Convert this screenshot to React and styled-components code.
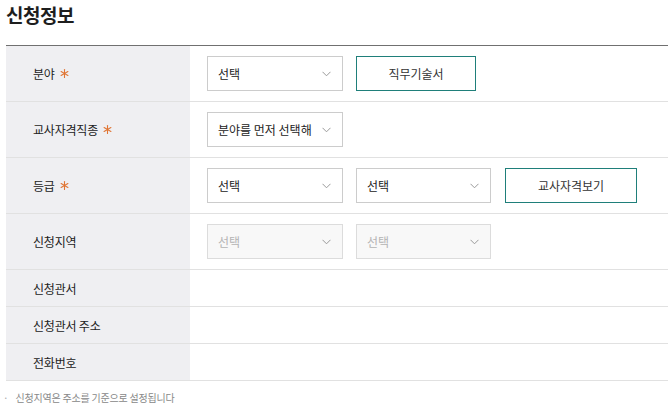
import React from "react";
import styled, { createGlobalStyle } from "styled-components";

const GlobalStyle = createGlobalStyle`
  html, body {
    margin: 0;
    padding: 0;
    background: #fff;
    font-family: "Noto Sans CJK KR", "Noto Sans", sans-serif;
    color: #222;
  }
`;

const Page = styled.div`
  padding: 0 0 0 6px;
  width: 662px;
`;

const Title = styled.h2`
  margin: 0;
  padding-top: 2px;
  height: 43px;
  font-size: 19px;
  font-weight: 700;
  letter-spacing: -0.5px;
  line-height: 26px;
  color: #1e1e1e;
`;

const Table = styled.div`
  border-top: 1px solid #707070;
`;

const Row = styled.div`
  display: grid;
  grid-template-columns: 184px 1fr;
  border-bottom: 1px solid #e1e1e1;
  min-height: ${({ $tall }) => ($tall ? "55px" : "36px")};
`;

const Label = styled.div`
  background: #efeff2;
  display: flex;
  align-items: center;
  padding-left: 27px;
  font-size: 12px;
  color: #222;
  letter-spacing: -0.2px;
`;

const StarIcon = styled.svg`
  margin-left: 5px;
  flex-shrink: 0;
`;

const Cell = styled.div`
  display: flex;
  align-items: center;
  padding: 10px 0 10px 17px;
  gap: 13px;
`;

const Select = styled.div`
  box-sizing: border-box;
  width: ${({ $w }) => $w || 136}px;
  height: 35px;
  border: 1px solid ${({ disabled }) => (disabled ? "#dcdcdc" : "#cccccc")};
  background: ${({ disabled }) => (disabled ? "#f8f8f8" : "#fff")};
  display: flex;
  align-items: center;
  justify-content: space-between;
  padding: 0 11px 0 10px;
  font-size: 12px;
  color: ${({ disabled }) => (disabled ? "#b4b4b4" : "#222")};
  white-space: nowrap;
  overflow: hidden;
`;

const Button = styled.button`
  box-sizing: border-box;
  width: ${({ $w }) => $w}px;
  height: 35px;
  margin-left: ${({ $ml }) => $ml || 0}px;
  border: 1px solid #1f7f7a;
  background: #fff;
  color: #333;
  font-family: inherit;
  font-size: 12px;
  cursor: pointer;
`;

const Note = styled.p`
  margin: 9px 0 0 -3px;
  font-size: 10px;
  color: #888;
  letter-spacing: -0.2px;
  &::before {
    content: "·";
    margin-right: 7px;
    color: #aaa;
  }
`;

// 6-arm asterisk used to mark required fields
const Star = () => (
  <StarIcon width="9" height="9" viewBox="0 0 9 9">
    <g stroke="#e07636" strokeWidth="1.1" strokeLinecap="round">
      <path d="M4.5 0.6 V8.4" />
      <path d="M1.1 2.55 L7.9 6.45" />
      <path d="M1.1 6.45 L7.9 2.55" />
    </g>
  </StarIcon>
);

const Chevron = () => (
  <svg width="9" height="6" viewBox="0 0 9 6" style={{ flexShrink: 0 }}>
    <path d="M0.5 0.8 L4.5 4.8 L8.5 0.8" fill="none" stroke="#999" strokeWidth="1" />
  </svg>
);

const Dropdown = ({ children, w, disabled }) => (
  <Select $w={w} disabled={disabled}>
    <span>{children}</span>
    <Chevron />
  </Select>
);

export default function App() {
  return (
    <Page>
      <GlobalStyle />
      <Title>신청정보</Title>
      <Table>
        <Row $tall>
          <Label>
            분야<Star />
          </Label>
          <Cell>
            <Dropdown>선택</Dropdown>
            <Button $w={120}>직무기술서</Button>
          </Cell>
        </Row>
        <Row $tall>
          <Label>
            교사자격직종<Star />
          </Label>
          <Cell>
            <Dropdown>분야를 먼저 선택해</Dropdown>
          </Cell>
        </Row>
        <Row $tall>
          <Label>
            등급<Star />
          </Label>
          <Cell>
            <Dropdown>선택</Dropdown>
            <Dropdown w={135}>선택</Dropdown>
            <Button $w={132} $ml={1}>교사자격보기</Button>
          </Cell>
        </Row>
        <Row $tall>
          <Label>신청지역</Label>
          <Cell>
            <Dropdown disabled>선택</Dropdown>
            <Dropdown w={135} disabled>선택</Dropdown>
          </Cell>
        </Row>
        <Row>
          <Label>신청관서</Label>
          <div />
        </Row>
        <Row>
          <Label>신청관서 주소</Label>
          <div />
        </Row>
        <Row>
          <Label>전화번호</Label>
          <div />
        </Row>
      </Table>
      <Note>신청지역은 주소를 기준으로 설정됩니다</Note>
    </Page>
  );
}
